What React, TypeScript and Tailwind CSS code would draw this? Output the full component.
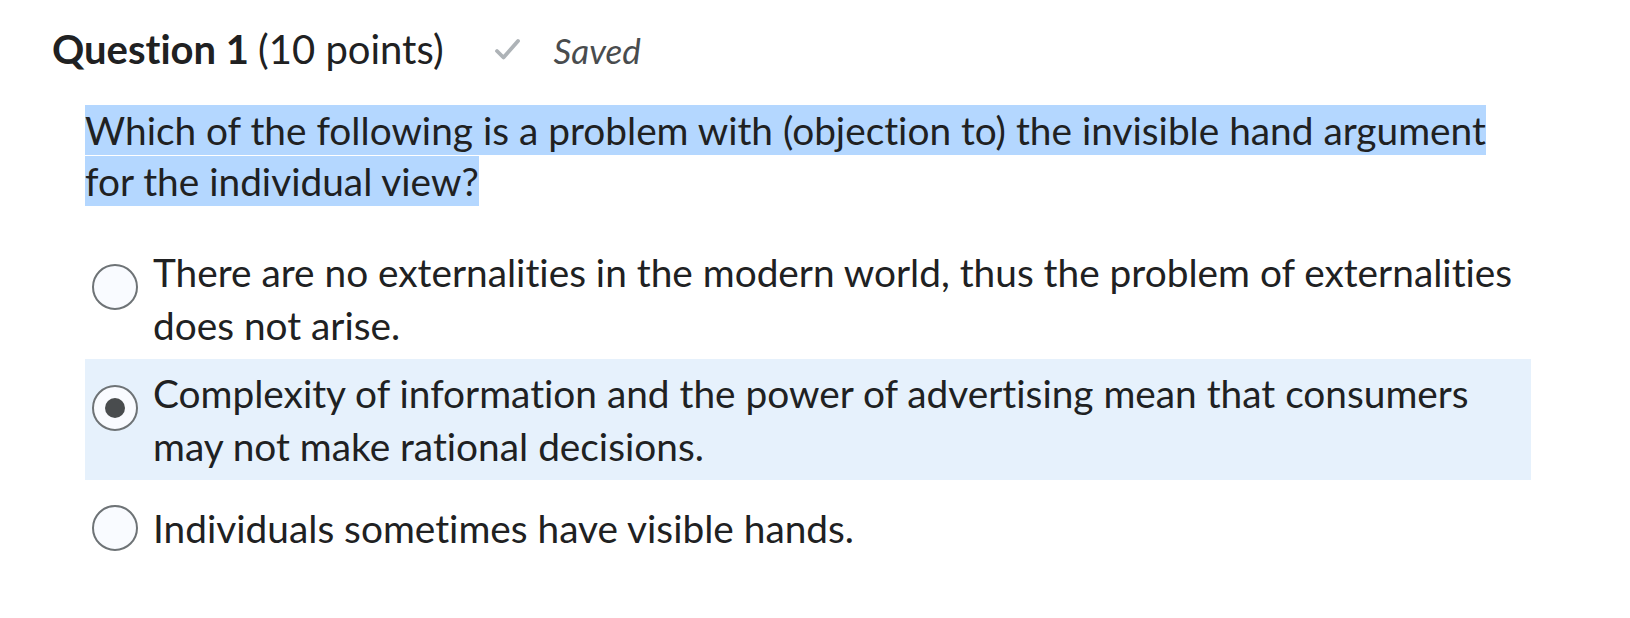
import { FC } from "react"

type Choice = {
  text: string
  selected?: boolean
  radioOffset: string
}

const choices: Choice[] = [
  {
    text: "There are no externalities in the modern world, thus the problem of externalities does not arise.",
    radioOffset: "mt-[18px]",
  },
  {
    text: "Complexity of information and the power of advertising mean that consumers may not make rational decisions.",
    selected: true,
    radioOffset: "mt-[18px]",
  },
  {
    text: "Individuals sometimes have visible hands.",
    radioOffset: "mt-[3px]",
  },
]

const Radio: FC<{ checked?: boolean; className?: string }> = ({ checked, className }) => (
  <span
    className={`flex shrink-0 w-[46px] h-[46px] items-center justify-center rounded-full border-2 border-[#6e7376] bg-[#f9fbff] ${className ?? ""}`}
  >
    {checked && <span className="block w-[20px] h-[20px] rounded-full bg-[#494c4e]" />}
  </span>
)

const App: FC = () => {
  return (
    <div className="w-[1630px] h-[618px] bg-white text-[#202122] font-['Lato','Noto_Sans',sans-serif] [font-variant-ligatures:none] overflow-hidden">
      <div className="pl-[52px] pt-[25px]">
        <div className="flex items-baseline h-[48px] text-[40px] leading-[1.2]">
          <span className="font-bold">Question 1</span>
          <span className="ml-[9px]">(10 points)</span>
          <svg
            className="ml-[50px] self-center w-[27px] h-[23px]"
            viewBox="0 0 27 23"
            fill="none"
            stroke="#aeb3b7"
            strokeWidth="3.8"
            strokeLinecap="round"
            strokeLinejoin="round"
          >
            <path d="M3 13 L9.5 19.5 L24 3" />
          </svg>
          <span className="ml-[33px] text-[35px] italic text-[#494c4e]">Saved</span>
        </div>
      </div>

      <div className="ml-[85px] w-[1446px] mt-[32px] text-[38.8px] leading-[51px]">
        <span className="bg-[#b4d7ff] py-[2px] box-decoration-clone">
          Which of the following is a problem with (objection to) the invisible hand argument for the individual view?
        </span>
      </div>

      <ul className="ml-[85px] w-[1446px] mt-[31px] text-[38.8px] leading-[53px]">
        {choices.map((c, i) => (
          <li
            key={i}
            className={`flex gap-[15px] pl-[7px] pr-2 pt-[8px] pb-[7px] ${c.selected ? "bg-[#e6f1fc]" : ""} ${i === 2 ? "mt-[14px]" : ""}`}
          >
            <Radio checked={c.selected} className={c.radioOffset} />
            <span>{c.text}</span>
          </li>
        ))}
      </ul>
    </div>
  )
}

export default App
